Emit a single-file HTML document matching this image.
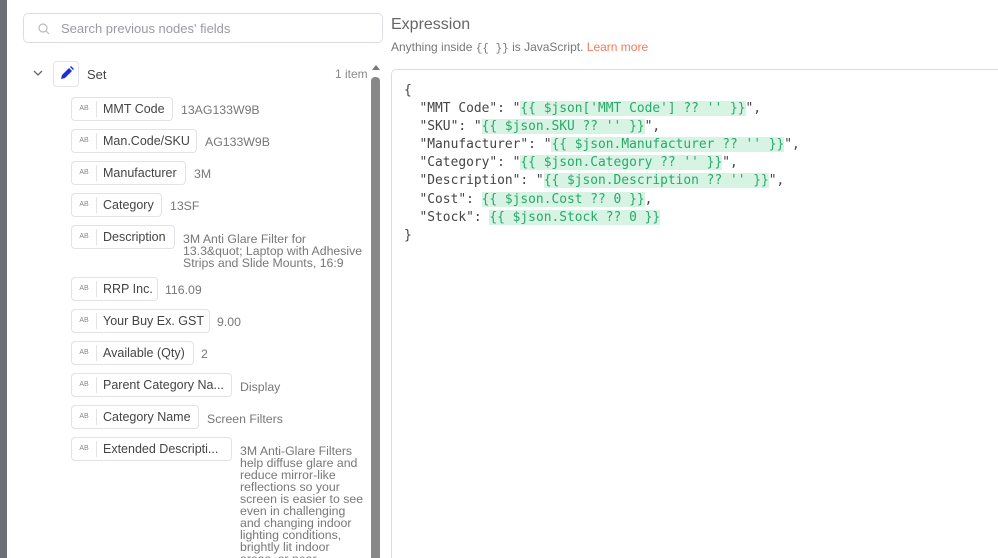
<!DOCTYPE html>
<html><head><meta charset="utf-8"><style>
*{box-sizing:border-box;margin:0;padding:0}
html,body{width:998px;height:558px;overflow:hidden}
body{background:#fff;font-family:"Liberation Sans",sans-serif;position:relative;color:#555}
.strip{position:absolute;left:0;top:0;width:7px;height:558px;background:#6e6e78}
.search{position:absolute;left:23px;top:13px;width:360px;height:30px;border:1px solid #dcdce5;border-radius:5px}
.search span{position:absolute;left:37px;top:7px;font-size:13px;color:#9a9aa5}
.search svg{position:absolute;left:14px;top:9px}
.chev{position:absolute;left:33px;top:68px}
.nodeic{position:absolute;left:53px;top:61px;width:26px;height:26px;border:1px solid #e4e4ea;border-radius:4px}
.set{position:absolute;left:87px;top:67px;font-size:13px;color:#444}
.items{position:absolute;left:335px;top:67px;font-size:12px;color:#888}
.sb{position:absolute;left:371px;top:77px;width:9px;height:481px;background:#888;border-radius:4px 4px 0 0}
.sbarr{position:absolute;left:372px;top:65px;width:0;height:0;border-left:4px solid transparent;border-right:4px solid transparent;border-bottom:5px solid #777}
.pill{position:absolute;left:71px;height:24px;border:1px solid #e2e2e8;border-radius:4px;font-size:12.5px;color:#444;display:flex;align-items:center;background:#fff}
.pill i{font-style:normal;font-size:7px;color:#888;width:25px;text-align:center;border-right:1px solid #e2e2e8;height:16px;line-height:16px;flex:none}
.pill b{font-weight:normal;padding:0 6px 0 6px;white-space:nowrap}
.val{position:absolute;font-size:12.3px;color:#777;line-height:12px;white-space:nowrap}
.title{position:absolute;left:391px;top:16px;font-size:16px;color:#666}
.sub{position:absolute;left:391px;top:40px;font-size:12px;color:#777}
.sub code{font-family:"Liberation Mono",monospace;font-size:11px}
.sub a{color:#f37b5e}
.ed{position:absolute;left:391px;top:69px;width:620px;height:500px;border:1px solid #dcdce5;border-radius:5px}
pre{position:absolute;left:404px;top:82px;font-family:"DejaVu Sans Mono","Liberation Mono",monospace;font-size:12.9px;line-height:18.1px;color:#444}
pre em{font-style:normal;background:#d7f3e4;color:#2aa96a}
</style></head><body>
<div class="strip"></div>
<div class="search"><svg width="12" height="12" viewBox="0 0 12 12"><circle cx="5" cy="5" r="4" fill="none" stroke="#bbb" stroke-width="1.2"/><line x1="8" y1="8" x2="11" y2="11" stroke="#bbb" stroke-width="1.2"/></svg><span>Search previous nodes' fields</span></div>
<svg class="chev" width="10" height="10" viewBox="0 0 10 10"><path d="M1 3l4 4 4-4" fill="none" stroke="#666" stroke-width="1.3"/></svg>
<div class="nodeic"><svg width="24" height="24" viewBox="0 0 24 24"><path d="M7 17l1-4 7-7 3 3-7 7z" fill="#1a2ee0"/><path d="M16 5l1-1 3 3-1 1z" fill="#1a2ee0"/></svg></div>
<div class="set">Set</div><div class="items">1 item</div>
<div class="sbarr"></div><div class="sb"></div>

<div class="pill" style="top:97px;width:102px"><i>AB</i><b>MMT Code</b></div><div class="val" style="left:181px;top:104px">13AG133W9B</div>
<div class="pill" style="top:129px;width:126px"><i>AB</i><b>Man.Code/SKU</b></div><div class="val" style="left:205px;top:136px">AG133W9B</div>
<div class="pill" style="top:161px;width:115px"><i>AB</i><b>Manufacturer</b></div><div class="val" style="left:194px;top:168px">3M</div>
<div class="pill" style="top:193px;width:91px"><i>AB</i><b>Category</b></div><div class="val" style="left:170px;top:200px">13SF</div>
<div class="pill" style="top:225px;width:104px"><i>AB</i><b>Description</b></div><div class="val" style="left:183px;top:233px">3M Anti Glare Filter for<br>13.3&amp;quot; Laptop with Adhesive<br>Strips and Slide Mounts, 16:9</div>
<div class="pill" style="top:277px;width:87px"><i>AB</i><b>RRP Inc.</b></div><div class="val" style="left:165px;top:284px">116.09</div>
<div class="pill" style="top:309px;width:139px"><i>AB</i><b>Your Buy Ex. GST</b></div><div class="val" style="left:217px;top:316px">9.00</div>
<div class="pill" style="top:341px;width:123px"><i>AB</i><b>Available (Qty)</b></div><div class="val" style="left:201px;top:348px">2</div>
<div class="pill" style="top:373px;width:161px"><i>AB</i><b>Parent Category Na...</b></div><div class="val" style="left:240px;top:381px">Display</div>
<div class="pill" style="top:405px;width:128px"><i>AB</i><b>Category Name</b></div><div class="val" style="left:207px;top:413px">Screen Filters</div>
<div class="pill" style="top:437px;width:161px"><i>AB</i><b>Extended Descripti...</b></div><div class="val" style="left:240px;top:445px">3M Anti-Glare Filters<br>help diffuse glare and<br>reduce mirror-like<br>reflections so your<br>screen is easier to see<br>even in challenging<br>and changing indoor<br>lighting conditions,<br>brightly lit indoor<br>areas, or near</div>

<div class="title">Expression</div>
<div class="sub">Anything inside <code>{{ }}</code> is JavaScript. <a>Learn more</a></div>
<div class="ed"></div>
<pre>{
  "MMT Code": "<em>{{ $json['MMT Code'] ?? '' }}</em>",
  "SKU": "<em>{{ $json.SKU ?? '' }}</em>",
  "Manufacturer": "<em>{{ $json.Manufacturer ?? '' }}</em>",
  "Category": "<em>{{ $json.Category ?? '' }}</em>",
  "Description": "<em>{{ $json.Description ?? '' }}</em>",
  "Cost": <em>{{ $json.Cost ?? 0 }}</em>,
  "Stock": <em>{{ $json.Stock ?? 0 }}</em>
}</pre>
</body></html>
